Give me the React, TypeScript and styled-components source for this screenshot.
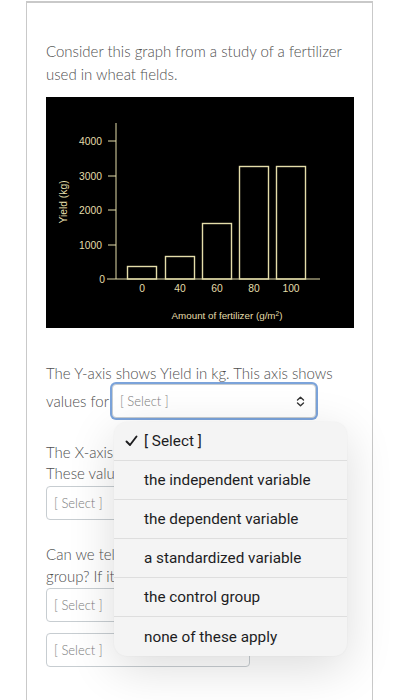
import React from 'react'
import styled, { createGlobalStyle } from 'styled-components'

const GlobalStyle = createGlobalStyle`
  html, body {
    margin: 0;
    padding: 0;
    background: #ffffff;
  }
  body {
    font-family: Lato, "Open Sans", sans-serif;
    color: #555555;
  }
`

const Page = styled.div`
  position: relative;
  width: 400px;
  height: 700px;
  overflow: hidden;
  padding: 1px 0 0 26px;
  box-sizing: border-box;
`

const Card = styled.div`
  width: 347px;
  height: 720px;
  box-sizing: border-box;
  border: 1px solid #c9c9c9;
  border-top-width: 2px;
  border-bottom: none;
  padding: 37px 18px 0 19px;
`

const Para = styled.p<{ top?: number; lh?: number }>`
  margin: ${({ top }) => top ?? 0}px 0 0 0;
  font-size: 15px;
  font-weight: 300;
  line-height: ${({ lh }) => lh ?? 23}px;
  color: #4f4f4f;
`

const ChartBox = styled.div`
  margin-top: 11px;
  width: 308px;
  height: 231px;
  background: #000000;
`

const InlineRow = styled.div<{ top?: number }>`
  display: flex;
  align-items: center;
  gap: 3px;
  margin-top: ${({ top }) => top ?? 0}px;
  font-size: 15px;
  font-weight: 300;
  color: #4f4f4f;
`

const SelectBox = styled.div<{ focused?: boolean; top?: number }>`
  display: flex;
  align-items: center;
  justify-content: space-between;
  box-sizing: border-box;
  width: 204px;
  height: 34px;
  margin-top: ${({ top }) => top ?? 0}px;
  padding: 0 10px 0 7px;
  border: 1px solid #c7cdd1;
  border-radius: 4px;
  background: #ffffff;
  font-size: 13px;
  font-weight: 300;
  color: #7d7d7d;
  box-shadow: ${({ focused }) => (focused ? '0 0 0 2px #7ba3da' : 'none')};
`

const Menu = styled.div`
  position: absolute;
  left: 114px;
  top: 422px;
  width: 233px;
  border-radius: 13px;
  background: #f4f4f4;
  box-shadow: 0 12px 48px rgba(0, 0, 0, 0.14), 0 0 2px rgba(0, 0, 0, 0.05);
  overflow: hidden;
  font-family: Roboto, "Noto Sans", sans-serif;
`

const MenuItem = styled.div<{ last?: boolean }>`
  position: relative;
  display: flex;
  align-items: center;
  height: 39px;
  box-sizing: border-box;
  padding-left: 30px;
  border-bottom: ${({ last }) => (last ? 'none' : '1px solid #dedede')};
  font-size: 15.3px;
  color: #1d1d1f;
`

const Check = styled.svg`
  position: absolute;
  left: 11px;
  top: 13px;
`

const chartColor = '#e4ddaa'

const bars = [
  { x: 81, top: 169, label: '0' },
  { x: 119, top: 159, label: '40' },
  { x: 156, top: 126, label: '60' },
  { x: 193, top: 69, label: '80' },
  { x: 230, top: 69, label: '100' },
]

const ticks = [
  { y: 44, label: '4000' },
  { y: 79, label: '3000' },
  { y: 113, label: '2000' },
  { y: 148, label: '1000' },
]

function YieldChart() {
  return (
    <ChartBox>
      <svg width="308" height="231" viewBox="0 0 308 231" fontFamily="Liberation Sans, Arial, sans-serif">
        <line x1="70" y1="26" x2="70" y2="182" stroke={chartColor} strokeWidth="1" />
        <line x1="61" y1="182" x2="274" y2="182" stroke={chartColor} strokeWidth="1" />
        {ticks.map((t) => (
          <g key={t.label}>
            <line x1="62" y1={t.y} x2="70" y2={t.y} stroke={chartColor} strokeWidth="1" />
            <text x="56" y={t.y + 3.6} textAnchor="end" fontSize="10.3" fill={chartColor}>
              {t.label}
            </text>
          </g>
        ))}
        <text x="59" y="185.6" textAnchor="end" fontSize="10.3" fill={chartColor}>0</text>
        {bars.map((b) => (
          <g key={b.label}>
            <rect x={b.x + 0.5} y={b.top + 0.5} width="29" height={182 - b.top - 0.5} fill="none" stroke={chartColor} strokeWidth="1.4" />
            <text x={b.x + 15} y="195" textAnchor="middle" fontSize="10.3" fill={chartColor}>
              {b.label}
            </text>
          </g>
        ))}
        <text x="181" y="222" textAnchor="middle" fontSize="9.8" fill={chartColor}>
          Amount of fertilizer (g/m
          <tspan fontSize="6.5" dy="-3.5">2</tspan>
          <tspan dy="3.5">)</tspan>
        </text>
        <text x="18" y="105" textAnchor="middle" fontSize="10.3" fill={chartColor} transform="rotate(-90 18 105)" dominantBaseline="middle">
          Yield (kg)
        </text>
      </svg>
    </ChartBox>
  )
}

function UpDown() {
  return (
    <svg width="9" height="11" viewBox="0 0 9 11">
      <path d="M1.5 4 L4.5 1.2 L7.5 4" fill="none" stroke="#333" strokeWidth="1.4" strokeLinecap="round" strokeLinejoin="round" />
      <path d="M1.5 7 L4.5 9.8 L7.5 7" fill="none" stroke="#333" strokeWidth="1.4" strokeLinecap="round" strokeLinejoin="round" />
    </svg>
  )
}

const options = [
  'the independent variable',
  'the dependent variable',
  'a standardized variable',
  'the control group',
  'none of these apply',
]

export default function App() {
  return (
    <>
      <GlobalStyle />
      <Page>
        <Card>
          <Para>Consider this graph from a study of a fertilizer used in wheat fields.</Para>
          <YieldChart />
          <Para top={34}>The Y-axis shows Yield in kg. This axis shows</Para>
          <InlineRow top={-1}>
            <span>values for</span>
            <SelectBox focused>
              <span>[ Select ]</span>
              <UpDown />
            </SelectBox>
          </InlineRow>
          <Para top={24} lh={21}>
            The X-axis shows fertilizer.
            <br />
            These values are
          </Para>
          <SelectBox top={2}>
            <span>[ Select ]</span>
            <UpDown />
          </SelectBox>
          <Para top={23} lh={22}>
            Can we tell which is the
            <br />
            group? If it is, pick it.
          </Para>
          <SelectBox top={1}>
            <span>[ Select ]</span>
            <UpDown />
          </SelectBox>
          <SelectBox top={11}>
            <span>[ Select ]</span>
            <UpDown />
          </SelectBox>
        </Card>
        <Menu>
          <MenuItem>
            <Check width="13" height="12" viewBox="0 0 13 12">
              <path d="M1.5 6.5 L5 10 L11.5 1.5" fill="none" stroke="#1d1d1f" strokeWidth="1.9" strokeLinecap="round" strokeLinejoin="round" />
            </Check>
            [ Select ]
          </MenuItem>
          {options.map((o, i) => (
            <MenuItem key={o} last={i === options.length - 1}>
              {o}
            </MenuItem>
          ))}
        </Menu>
      </Page>
    </>
  )
}
